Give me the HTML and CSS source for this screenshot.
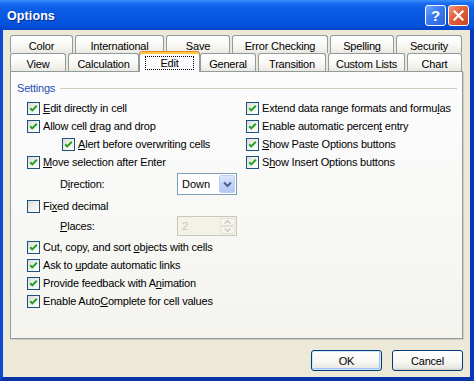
FILE: index.html
```html
<!DOCTYPE html>
<html>
<head>
<meta charset="utf-8">
<link rel="stylesheet" href="styles.css">
</head>
<body>
<div class="window">
  <div class="titlebar">
    <span class="title">Options</span>
    <div class="tb-buttons">
      <span class="tb-btn help">?</span>
      <span class="tb-btn close"><svg width="11" height="11" viewBox="0 0 11 11"><path d="M1.5 1.5L9.5 9.5M9.5 1.5L1.5 9.5" stroke="#fff" stroke-width="2.2" stroke-linecap="square" fill="none"/></svg></span>
    </div>
  </div>
  <div class="frame">
    <div class="client">
      <div class="tabs">
        <div class="tabrow">
          <div class="tab w63">Color</div>
          <div class="tab w89">International</div>
          <div class="tab w64">Save</div>
          <div class="tab w96">Error Checking</div>
          <div class="tab w64">Spelling</div>
          <div class="tab w66">Security</div>
        </div>
        <div class="tabrow">
          <div class="tab w56">View</div>
          <div class="tab w71">Calculation</div>
          <div class="tab active"><span class="focus">Edit</span></div>
          <div class="tab w56">General</div>
          <div class="tab w68">Transition</div>
          <div class="tab w77">Custom Lists</div>
          <div class="tab w55">Chart</div>
        </div>
      </div>
      <div class="panel">
        <div class="heading"><span class="heading-text">Settings</span><span class="heading-line"></span></div>
        <div class="cols">
          <div class="col left">
            <div class="row"><span class="cb"><svg width="11" height="11" viewBox="0 0 11 11"><path d="M2.2 5.2L4.3 7.4L8.8 2.8" class="chk"/></svg></span><span><u>E</u>dit directly in cell</span></div>
            <div class="row"><span class="cb"><svg width="11" height="11" viewBox="0 0 11 11"><path d="M2.2 5.2L4.3 7.4L8.8 2.8" class="chk"/></svg></span><span>Allow cell <u>d</u>rag and drop</span></div>
            <div class="row indent"><span class="cb"><svg width="11" height="11" viewBox="0 0 11 11"><path d="M2.2 5.2L4.3 7.4L8.8 2.8" class="chk"/></svg></span><span><u>A</u>lert before overwriting cells</span></div>
            <div class="row"><span class="cb"><svg width="11" height="11" viewBox="0 0 11 11"><path d="M2.2 5.2L4.3 7.4L8.8 2.8" class="chk"/></svg></span><span><u>M</u>ove selection after Enter</span></div>
            <div class="row field-row dir-row">
              <span class="field-label">D<u>i</u>rection:</span>
              <span class="combo"><span class="combo-text">Down</span><span class="combo-btn"><svg width="9" height="7" viewBox="0 0 9 7"><path d="M1 1.5L4.5 5L8 1.5" stroke="#4D6185" stroke-width="2" fill="none"/></svg></span></span>
            </div>
            <div class="row fixed-row"><span class="cb off"></span><span>Fi<u>x</u>ed decimal</span></div>
            <div class="row field-row places-row">
              <span class="field-label"><u>P</u>laces:</span>
              <span class="spin"><span class="spin-text">2</span><span class="spin-btns"><span class="spin-btn"><svg width="7" height="4" viewBox="0 0 7 4"><path d="M0.5 3.5L3.5 0.8L6.5 3.5" stroke="#C9C7BA" stroke-width="1.3" fill="none"/></svg></span><span class="spin-btn"><svg width="7" height="4" viewBox="0 0 7 4"><path d="M0.5 0.5L3.5 3.2L6.5 0.5" stroke="#C9C7BA" stroke-width="1.3" fill="none"/></svg></span></span></span>
            </div>
            <div class="row cut-row"><span class="cb"><svg width="11" height="11" viewBox="0 0 11 11"><path d="M2.2 5.2L4.3 7.4L8.8 2.8" class="chk"/></svg></span><span>Cut, copy, and sort <u>o</u>bjects with cells</span></div>
            <div class="row"><span class="cb"><svg width="11" height="11" viewBox="0 0 11 11"><path d="M2.2 5.2L4.3 7.4L8.8 2.8" class="chk"/></svg></span><span>Ask to <u>u</u>pdate automatic links</span></div>
            <div class="row"><span class="cb"><svg width="11" height="11" viewBox="0 0 11 11"><path d="M2.2 5.2L4.3 7.4L8.8 2.8" class="chk"/></svg></span><span>Provide feedback with A<u>n</u>imation</span></div>
            <div class="row"><span class="cb"><svg width="11" height="11" viewBox="0 0 11 11"><path d="M2.2 5.2L4.3 7.4L8.8 2.8" class="chk"/></svg></span><span>Enable Auto<u>C</u>omplete for cell values</span></div>
          </div>
          <div class="col right">
            <div class="row"><span class="cb"><svg width="11" height="11" viewBox="0 0 11 11"><path d="M2.2 5.2L4.3 7.4L8.8 2.8" class="chk"/></svg></span><span>Extend data range formats and formu<u>l</u>as</span></div>
            <div class="row"><span class="cb"><svg width="11" height="11" viewBox="0 0 11 11"><path d="M2.2 5.2L4.3 7.4L8.8 2.8" class="chk"/></svg></span><span>Enable automatic percen<u>t</u> entry</span></div>
            <div class="row"><span class="cb"><svg width="11" height="11" viewBox="0 0 11 11"><path d="M2.2 5.2L4.3 7.4L8.8 2.8" class="chk"/></svg></span><span><u>S</u>how Paste Options buttons</span></div>
            <div class="row"><span class="cb"><svg width="11" height="11" viewBox="0 0 11 11"><path d="M2.2 5.2L4.3 7.4L8.8 2.8" class="chk"/></svg></span><span>S<u>h</u>ow Insert Options buttons</span></div>
          </div>
        </div>
      </div>
      <div class="buttons">
        <span class="btn default">OK</span>
        <span class="btn">Cancel</span>
      </div>
    </div>
  </div>
</div>
</body>
</html>
```

FILE: styles.css
```css
* { box-sizing: border-box; }
html, body { margin: 0; padding: 0; }
body {
  width: 474px;
  height: 381px;
  overflow: hidden;
  font-family: "Liberation Sans", Arial, sans-serif;
  font-size: 11px;
  color: #000;
  background: #ffffff;
}
u { text-decoration: underline; text-underline-offset: 1px; }

.window {
  width: 474px;
  height: 381px;
  display: flex;
  flex-direction: column;
}

.titlebar {
  flex: none;
  height: 30px;
  display: flex;
  align-items: center;
  justify-content: space-between;
  padding: 0 5px 0 7px;
  background: linear-gradient(to bottom, #3C8FFC 0px, #1C70F3 3px, #0B5EE7 8px, #0857E1 18px, #0551DC 25px, #0444C8 30px);
}
.title {
  color: #ffffff;
  font-weight: bold;
  font-size: 12.5px;
  letter-spacing: 0.1px;
  text-shadow: 1px 1px 0 #0B2A8F;
  margin-top: 1px;
}
.tb-buttons { display: flex; gap: 2px; margin-top: 1px; }
.tb-btn {
  width: 21px;
  height: 21px;
  border: 1px solid #ffffff;
  border-radius: 3px;
  display: flex;
  align-items: center;
  justify-content: center;
}
.help {
  background: linear-gradient(135deg, #6FA3FF 0%, #3A7AF0 45%, #2A66E0 100%);
  color: #ffffff;
  font-weight: bold;
  font-size: 15px;
  line-height: 1;
}
.close {
  background: linear-gradient(135deg, #F29A7C 0%, #E2643E 40%, #CC4420 100%);
}

.frame {
  flex: 1;
  display: flex;
  border-left: 3px solid #0A4BD6;
  border-right: 4px solid #0836B8;
  border-bottom: 4px solid #0833A8;
}
.client {
  flex: 1;
  background: #ECE9D8;
  padding: 5px 7px 0 7px;
  display: flex;
  flex-direction: column;
}

.tabs { display: flex; flex-direction: column; }
.tabrow { display: flex; gap: 2px; height: 18px; }
.tab {
  flex: none;
  height: 18px;
  border: 1px solid #919B9C;
  border-bottom: none;
  border-radius: 3px 3px 0 0;
  background: linear-gradient(to bottom, #FFFFFF 0%, #FBFBF9 40%, #F1F0EA 80%, #E8E7E0 100%);
  display: flex;
  align-items: center;
  justify-content: center;
  padding-top: 2px;
  white-space: nowrap;
  letter-spacing: -0.2px;
}
.w55 { width: 55px; }
.w56 { width: 56px; }
.w63 { width: 63px; }
.w64 { width: 64px; }
.w66 { width: 66px; }
.w68 { width: 68px; }
.w71 { width: 71px; }
.w77 { width: 77px; }
.w89 { width: 89px; }
.w96 { width: 96px; }
.tab.active {
  position: relative;
  z-index: 1;
  width: 61px;
  height: 21px;
  margin: -2px -2px 0 -2px;
  background: #FCFCFE;
  border-top: 1px solid #E68B2C;
  box-shadow: inset 0 2px 0 #FFC73C;
  align-items: flex-start;
  padding-top: 4px;
}
.focus {
  border: 1px dotted #000000;
  padding: 0 14px;
  line-height: 12px;
}

.panel {
  height: 268px;
  border: 1px solid #919B9C;
  background: linear-gradient(to bottom, #FCFCFE 0%, #F8F8F6 50%, #F4F3EE 100%);
  box-shadow: 1px 1px 0 #D0CEBF;
  padding: 9px 5px 0 6px;
  display: flex;
  flex-direction: column;
}
.heading {
  display: flex;
  align-items: center;
  height: 14px;
  gap: 5px;
}
.heading-text { color: #1F4FB4; letter-spacing: -0.2px; }
.heading-line { flex: 1; height: 1px; background: #D0D0BF; }

.cols {
  display: flex;
  margin: 4px 0 0 10px;
}
.col { display: flex; flex-direction: column; }
.col.left { width: 219px; }
.col.right { flex: 1; }

.row {
  display: flex;
  align-items: center;
  height: 18px;
  gap: 3px;
  white-space: nowrap;
  letter-spacing: -0.2px;
}
.row.indent { padding-left: 35px; }
.cb {
  flex: none;
  width: 13px;
  height: 13px;
  border: 1px solid #1C5180;
  background: linear-gradient(135deg, #DCDCD7 0%, #F0F0EC 50%, #FFFFFF 100%);
  display: flex;
}
.chk { stroke: #21A121; stroke-width: 2; fill: none; }

.field-row { gap: 0; padding-left: 33px; }
.dir-row { height: 22px; margin-top: 2px; }
.fixed-row { margin-top: 2px; }
.places-row { height: 20px; margin-top: 1px; }
.cut-row { margin-top: 2px; }
.field-label { width: 117px; }

.combo {
  width: 60px;
  height: 22px;
  border: 1px solid #7F9DB9;
  background: #FFFFFF;
  display: flex;
  align-items: center;
  justify-content: space-between;
  padding: 1px;
}
.combo-text { padding-left: 3px; letter-spacing: 0; }
.combo-btn {
  width: 16px;
  height: 18px;
  border: 1px solid #BAD0F8;
  border-radius: 2px;
  background: linear-gradient(to bottom, #DDE8FD 0%, #C1D3FB 50%, #B4C8F6 100%);
  display: flex;
  align-items: center;
  justify-content: center;
}

.spin {
  width: 60px;
  height: 20px;
  border: 1px solid #C9C7BA;
  background: #F3F2E8;
  display: flex;
  align-items: center;
  justify-content: space-between;
  padding: 1px;
}
.spin-text { padding-left: 3px; color: #C9C7BA; }
.spin-btns {
  width: 15px;
  height: 16px;
  display: flex;
  flex-direction: column;
  gap: 0;
}
.spin-btn {
  flex: 1;
  border: 1px solid #E3E1D6;
  border-radius: 2px;
  background: #F5F4EE;
  display: flex;
  align-items: center;
  justify-content: center;
}

.buttons {
  display: flex;
  justify-content: flex-end;
  gap: 10px;
  margin-top: 11px;
}
.btn {
  width: 71px;
  height: 21px;
  border: 1px solid #003C74;
  border-radius: 3px;
  background: linear-gradient(to bottom, #FFFFFF 0%, #F6F6F2 60%, #ECEBE6 85%, #D6D0C5 100%);
  display: flex;
  align-items: center;
  justify-content: center;
  letter-spacing: -0.2px;
}
.btn.default {
  box-shadow: inset 0 0 0 1px #CEE7FF, inset -1px -1px 0 1px #A9BEF3;
}
```
